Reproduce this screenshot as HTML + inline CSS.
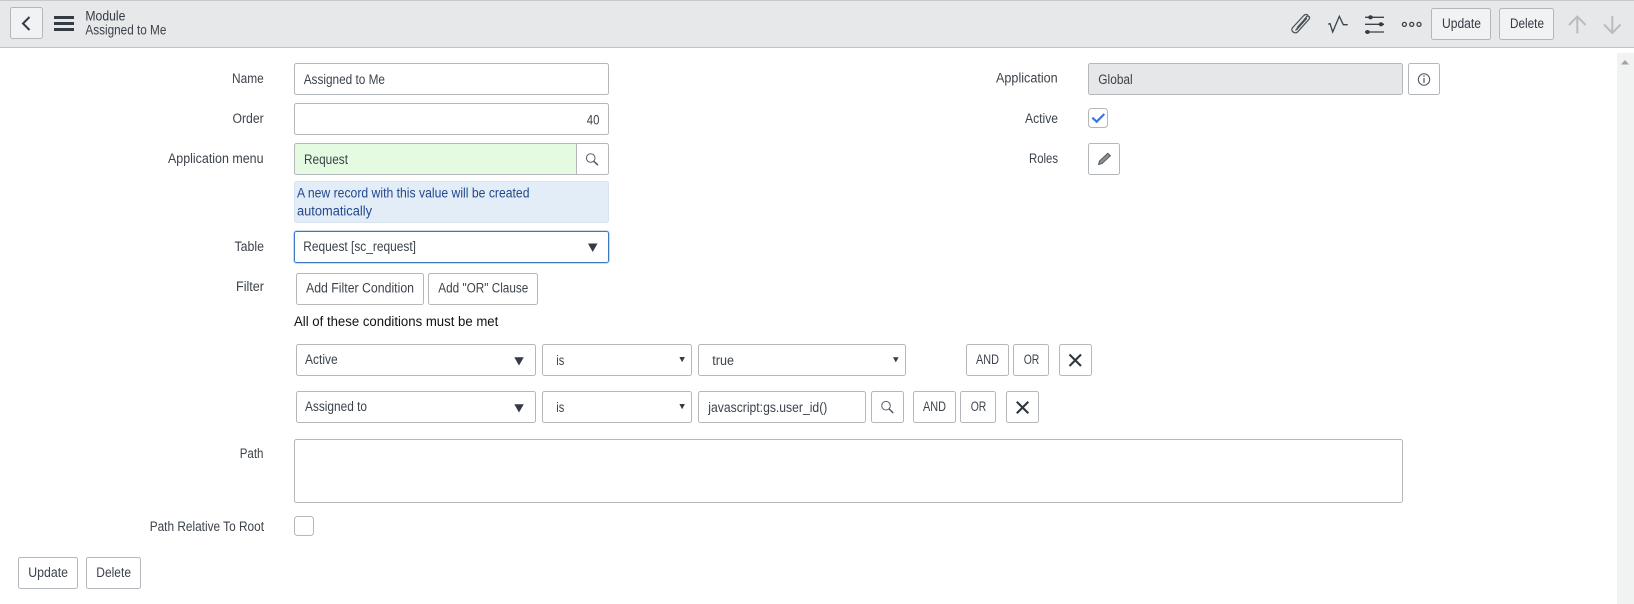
<!DOCTYPE html>
<html><head><meta charset="utf-8"><title>Module</title>
<style>
html,body{margin:0;padding:0;width:1634px;height:604px;overflow:hidden;background:#fff}
svg{display:block;filter:blur(.3px)}
text{font-family:"Liberation Sans",sans-serif;font-size:13.5px;fill:#3c434b}
.b{fill:#fff;stroke:#b4b7bb;stroke-width:1}
.h{fill:#f1f2f3;stroke:#b4b7bb;stroke-width:1}
.i{fill:none;stroke:#3a424b;stroke-width:1.3}
.t{fill:#343b44}
</style></head>
<body>
<svg width="1634" height="604" viewBox="0 0 1634 604" xmlns="http://www.w3.org/2000/svg">
<!-- header -->
<rect x="0" y="0" width="1634" height="47" fill="#e6e8ea"/>
<rect x="0" y="0" width="1634" height="1" fill="#c6c9cc"/>
<rect x="0" y="47" width="1634" height="1" fill="#bfc3c7"/>
<rect class="h" x="10.5" y="7.5" width="32" height="31" rx="2"/>
<path d="M29.5 17 L23 23.5 L29.5 30" fill="none" stroke="#343b44" stroke-width="2"/>
<rect x="54" y="16" width="20" height="3" fill="#343b44"/>
<rect x="54" y="22" width="20" height="3" fill="#343b44"/>
<rect x="54" y="28" width="20" height="3" fill="#343b44"/>
<text x="85.4" y="20.5" textLength="40" lengthAdjust="spacingAndGlyphs" class="t">Module</text>
<text x="85.4" y="34.5" textLength="81" lengthAdjust="spacingAndGlyphs">Assigned to Me</text>

<!-- header icons -->
<path d="M1295.5 30.5 L1306.3 17 C1307.8 15 1310.5 16.8 1309.2 19 L1297.5 32 C1295 34.3 1290.3 31.2 1292.3 28 L1303.8 15.5 C1305.5 13.8 1307.5 14.6 1308 15.5 M1297.2 27.6 L1305.5 18.3 C1306 17.6 1306.7 18.1 1306.4 18.8 L1296.5 29.8" fill="none" stroke="#4a5259" stroke-width="1.25"/>
<path class="i" d="M1328.2 24.2 L1330 23.6 L1332.7 32 L1339.3 16.3 L1343.3 24.7 L1347.7 24.7" stroke-width="1.6"/>
<path class="i" d="M1365 17.3 H1384 M1365 24.3 H1384 M1365 32 H1384" stroke-width="1.3"/>
<ellipse cx="1370.5" cy="17.3" rx="2.3" ry="2" fill="#343b44"/>
<ellipse cx="1381" cy="24.3" rx="2.3" ry="2" fill="#343b44"/>
<ellipse cx="1367.5" cy="32" rx="2.3" ry="2" fill="#343b44"/>
<circle class="i" cx="1404.4" cy="24.4" r="2"/>
<circle class="i" cx="1411.7" cy="24.4" r="2"/>
<circle class="i" cx="1419" cy="24.4" r="2"/>
<rect class="h" x="1431.5" y="8.5" width="59" height="31" rx="2"/>
<text x="1442" y="28" textLength="39" lengthAdjust="spacingAndGlyphs" class="t">Update</text>
<rect class="h" x="1499.5" y="8.5" width="54" height="31" rx="2"/>
<text x="1510" y="28" textLength="34" lengthAdjust="spacingAndGlyphs" class="t">Delete</text>
<path d="M1577.3 33.5 V17 M1569 25 L1577.3 16.5 L1585.6 25" fill="none" stroke="#b9bdc1" stroke-width="2"/>
<path d="M1612.3 16 V32.5 M1604 24.5 L1612.3 33 L1620.6 24.5" fill="none" stroke="#b9bdc1" stroke-width="2"/>

<!-- scrollbar -->
<rect x="1617" y="53" width="17" height="551" fill="#f1f2f2"/>
<path d="M1621 64.5 L1625 60 L1629 64.5 Z" fill="#a3a3a3"/>

<!-- left labels -->
<text x="232" y="83" textLength="31.7" lengthAdjust="spacingAndGlyphs">Name</text>
<text x="232.5" y="123" textLength="31.2" lengthAdjust="spacingAndGlyphs">Order</text>
<text x="168" y="163" textLength="95.5" lengthAdjust="spacingAndGlyphs">Application menu</text>
<text x="234.5" y="251" textLength="29.5" lengthAdjust="spacingAndGlyphs">Table</text>
<text x="236" y="291" textLength="28" lengthAdjust="spacingAndGlyphs">Filter</text>
<text x="239.7" y="458" textLength="23.8" lengthAdjust="spacingAndGlyphs">Path</text>
<text x="149.7" y="531" textLength="114.3" lengthAdjust="spacingAndGlyphs">Path Relative To Root</text>

<!-- name / order -->
<rect class="b" x="294.5" y="63.5" width="314" height="31" rx="2"/>
<text x="303.7" y="84" textLength="81.3" lengthAdjust="spacingAndGlyphs">Assigned to Me</text>
<rect class="b" x="294.5" y="103.5" width="314" height="31" rx="2"/>
<text x="586.8" y="124.3" textLength="12.7" lengthAdjust="spacingAndGlyphs">40</text>

<!-- application menu -->
<path d="M296.5 143.5 H576.5 V174.5 H296.5 A2 2 0 0 1 294.5 172.5 V145.5 A2 2 0 0 1 296.5 143.5 Z" fill="#e4fbe2" stroke="#b4b7bb"/>
<path d="M576.5 143.5 H606.5 A2 2 0 0 1 608.5 145.5 V172.5 A2 2 0 0 1 606.5 174.5 H576.5 Z" fill="#fff" stroke="#b4b7bb"/>
<text x="304" y="164" textLength="44" lengthAdjust="spacingAndGlyphs">Request</text>
<circle cx="590.7" cy="158" r="4.3" fill="none" stroke="#5a6168" stroke-width="1"/>
<path d="M593.8 161.3 L598 165.2" stroke="#4a525a" stroke-width="1.4"/>
<rect x="294.5" y="181.5" width="314" height="41" rx="2" fill="#e3edf8" stroke="#d8e3f0"/>
<text x="297" y="197.3" textLength="232.5" lengthAdjust="spacingAndGlyphs" style="fill:#22488d">A new record with this value will be created</text>
<text x="297" y="215.3" textLength="75" lengthAdjust="spacingAndGlyphs" style="fill:#22488d">automatically</text>

<!-- table -->
<rect x="294.5" y="231.5" width="314" height="31" rx="2" fill="#fff" stroke="#3c78c4" stroke-width="1"/>
<rect x="293.5" y="230.5" width="316" height="33" rx="3" fill="none" stroke="#a8c6e8" stroke-width="1" opacity=".6"/>
<text x="303.3" y="251" textLength="112.7" lengthAdjust="spacingAndGlyphs">Request [sc_request]</text>
<path d="M588 243.5 H597.5 L592.7 252 Z" fill="#343b44"/>

<!-- filter -->
<rect class="b" x="296.5" y="273.5" width="127" height="31" rx="2"/>
<text x="306" y="292.7" textLength="108" lengthAdjust="spacingAndGlyphs">Add Filter Condition</text>
<rect class="b" x="428.5" y="273.5" width="109" height="31" rx="2"/>
<text x="438.3" y="292.7" textLength="90" lengthAdjust="spacingAndGlyphs">Add "OR" Clause</text>
<text x="294" y="326" textLength="204.3" lengthAdjust="spacingAndGlyphs" style="fill:#111">All of these conditions must be met</text>

<!-- row 1 -->
<rect class="b" x="296.5" y="344.5" width="239" height="31" rx="2"/>
<text x="305" y="364" textLength="32.7" lengthAdjust="spacingAndGlyphs">Active</text>
<path d="M514.3 357.3 H523.8 L519 365.5 Z" fill="#343b44"/>
<rect class="b" x="542.5" y="344.5" width="149" height="31" rx="2"/>
<text x="556.3" y="365" textLength="8" lengthAdjust="spacingAndGlyphs">is</text>
<path d="M679.4 357 H684.9 L682.1 362.2 Z" fill="#343b44"/>
<rect class="b" x="698.5" y="344.5" width="207" height="31" rx="2"/>
<text x="712.3" y="365" textLength="21.7" lengthAdjust="spacingAndGlyphs">true</text>
<path d="M893 357.2 H898.6 L895.8 362.4 Z" fill="#343b44"/>
<rect class="b" x="966.5" y="344.5" width="42" height="31" rx="2"/>
<text x="976" y="364" textLength="23" lengthAdjust="spacingAndGlyphs">AND</text>
<rect class="b" x="1013.5" y="344.5" width="35" height="31" rx="2"/>
<text x="1023.7" y="364" textLength="15.6" lengthAdjust="spacingAndGlyphs">OR</text>
<rect class="b" x="1059.5" y="344.5" width="32" height="31" rx="2"/>
<path d="M1069.5 354.5 L1081 366 M1081 354.5 L1069.5 366" stroke="#2f363e" stroke-width="2.1"/>

<!-- row 2 -->
<rect class="b" x="296.5" y="391.5" width="239" height="31" rx="2"/>
<text x="305" y="411" textLength="62" lengthAdjust="spacingAndGlyphs">Assigned to</text>
<path d="M514.3 404.3 H523.8 L519 412.5 Z" fill="#343b44"/>
<rect class="b" x="542.5" y="391.5" width="149" height="31" rx="2"/>
<text x="556.3" y="412" textLength="8" lengthAdjust="spacingAndGlyphs">is</text>
<path d="M679.4 404 H684.9 L682.1 409.2 Z" fill="#343b44"/>
<rect class="b" x="698.5" y="391.5" width="167" height="31" rx="2"/>
<text x="708.3" y="412" textLength="119" lengthAdjust="spacingAndGlyphs">javascript:gs.user_id()</text>
<rect class="b" x="871.5" y="391.5" width="32" height="31" rx="2"/>
<circle cx="886" cy="405.7" r="4.3" fill="none" stroke="#5a6168" stroke-width="1"/>
<path d="M889.1 409 L893.3 413" stroke="#4a525a" stroke-width="1.4"/>
<rect class="b" x="913.5" y="391.5" width="42" height="31" rx="2"/>
<text x="923" y="411" textLength="23" lengthAdjust="spacingAndGlyphs">AND</text>
<rect class="b" x="960.5" y="391.5" width="35" height="31" rx="2"/>
<text x="970.7" y="411" textLength="15.6" lengthAdjust="spacingAndGlyphs">OR</text>
<rect class="b" x="1006.5" y="391.5" width="32" height="31" rx="2"/>
<path d="M1016.8 401.8 L1028.3 413.3 M1028.3 401.8 L1016.8 413.3" stroke="#2f363e" stroke-width="2.1"/>

<!-- path -->
<rect class="b" x="294.5" y="439.5" width="1108" height="63" rx="2"/>
<rect class="b" x="294.5" y="516.5" width="19" height="19" rx="3"/>

<!-- bottom buttons -->
<rect class="b" x="18.5" y="557.5" width="59" height="31" rx="2"/>
<text x="28.3" y="577" textLength="39.7" lengthAdjust="spacingAndGlyphs">Update</text>
<rect class="b" x="86.5" y="557.5" width="54" height="31" rx="2"/>
<text x="96.3" y="577" textLength="34.7" lengthAdjust="spacingAndGlyphs">Delete</text>

<!-- right column -->
<text x="996" y="82.7" textLength="61.7" lengthAdjust="spacingAndGlyphs">Application</text>
<text x="1025" y="123" textLength="33" lengthAdjust="spacingAndGlyphs">Active</text>
<text x="1029" y="163" textLength="29" lengthAdjust="spacingAndGlyphs">Roles</text>
<rect x="1088.5" y="63.5" width="314" height="31" rx="2" fill="#e6e7e9" stroke="#b4b7bb"/>
<text x="1098.3" y="84" textLength="34.4" lengthAdjust="spacingAndGlyphs">Global</text>
<rect class="b" x="1408.5" y="63.5" width="31" height="31" rx="2"/>
<circle cx="1424" cy="79.5" r="5.7" fill="none" stroke="#4a525a" stroke-width="1"/>
<path d="M1424 78 V83" stroke="#4a525a" stroke-width="1.2"/>
<circle cx="1424" cy="76" r=".8" fill="#4a525a"/>
<rect class="b" x="1088.5" y="108.5" width="19" height="19" rx="3"/>
<path d="M1092.3 117.7 L1096.7 121.7 L1104.3 114" fill="none" stroke="#3b78d8" stroke-width="2.2"/>
<rect class="b" x="1088.5" y="143.5" width="31" height="31" rx="2"/>
<path d="M1098.5 164.5 L1099.5 161 L1107.8 153.3 L1110.4 155.8 L1102 163.6 Z" fill="#8a9096" stroke="#4a525a" stroke-width=".9"/>
</svg>
</body></html>
